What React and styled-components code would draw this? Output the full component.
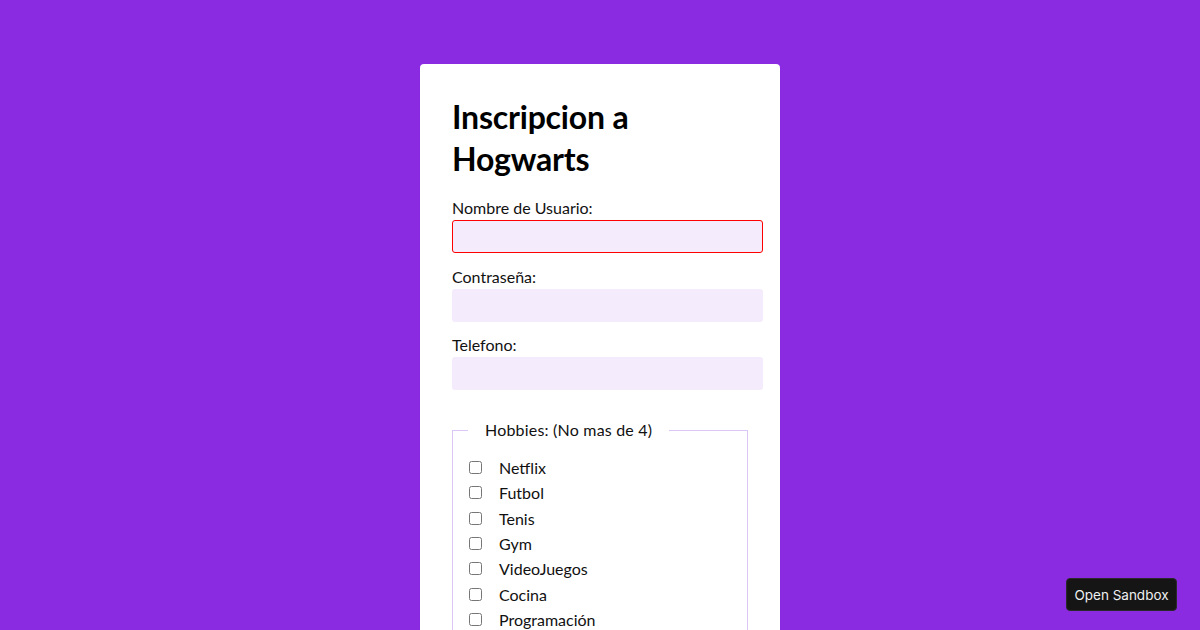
import React from "react";
import styled, { createGlobalStyle } from "styled-components";

const GlobalStyle = createGlobalStyle`
  html, body {
    margin: 0;
    padding: 0;
    background: #8a2be2;
    font-family: "Lato", "Noto Sans", sans-serif;
    color: #111;
  }
`;

const Page = styled.div`
  min-height: 100vh;
  display: flex;
  justify-content: center;
  padding-top: 64px;
  box-sizing: border-box;
`;

const Card = styled.form`
  width: 360px;
  box-sizing: border-box;
  background: #ffffff;
  border-radius: 4px;
  padding: 32px 32px 40px;
  display: flex;
  flex-direction: column;
`;

const Title = styled.h1`
  margin: 0 0 18px;
  font-size: 32px;
  line-height: 42px;
  font-weight: 700;
  color: #000;
  letter-spacing: -0.2px;
`;

const Field = styled.div`
  display: flex;
  flex-direction: column;
  margin-bottom: ${(p) => p.$gap ?? 14}px;
`;

const Label = styled.label`
  font-size: 16px;
  line-height: 20px;
  margin-bottom: 2px;
  color: #111;
`;

const Input = styled.input`
  width: 311px;
  height: 33px;
  box-sizing: border-box;
  margin: 0;
  border: 1px solid ${(p) => (p.$invalid ? "#ff0000" : "transparent")};
  border-radius: 3px;
  background: #f4ebfc;
  outline: none;
  font: inherit;
  padding: 0 8px;
`;

const Hobbies = styled.fieldset`
  width: 296px;
  box-sizing: border-box;
  margin: 15px 0 0;
  padding: 4px 16px 0 15px;
  border: 1px solid #dcc6f4;
  border-radius: 0;
  min-inline-size: auto;
`;

const Legend = styled.legend`
  padding: 0 17px;
  font-size: 16px;
  line-height: 22px;
  letter-spacing: 0.2px;
  color: #111;
`;

const OptionList = styled.div`
  display: flex;
  flex-direction: column;
  padding-top: 10px;
`;

const Option = styled.label`
  display: flex;
  align-items: center;
  height: 25.33px;
  font-size: 16px;
  color: #111;

  input {
    width: 13px;
    height: 13px;
    margin: 0 17px 0 1px;
  }
`;

const SandboxButton = styled.button`
  position: fixed;
  right: 23px;
  bottom: 19px;
  width: 111px;
  height: 33px;
  background: #151515;
  color: #f0f0f0;
  border: 1px solid #2a2a2a;
  border-radius: 4px;
  font-family: "Inter", "Roboto", sans-serif;
  font-size: 13.5px;
  cursor: pointer;
`;

const hobbies = [
  "Netflix",
  "Futbol",
  "Tenis",
  "Gym",
  "VideoJuegos",
  "Cocina",
  "Programación",
];

export default function App() {
  return (
    <>
      <GlobalStyle />
      <Page>
        <Card onSubmit={(e) => e.preventDefault()}>
          <Title>
            Inscripcion a<br />
            Hogwarts
          </Title>
          <Field>
            <Label htmlFor="usuario">Nombre de Usuario:</Label>
            <Input id="usuario" type="text" $invalid />
          </Field>
          <Field $gap={13}>
            <Label htmlFor="pass">Contraseña:</Label>
            <Input id="pass" type="password" />
          </Field>
          <Field $gap={14}>
            <Label htmlFor="tel">Telefono:</Label>
            <Input id="tel" type="tel" />
          </Field>
          <Hobbies>
            <Legend>Hobbies: (No mas de 4)</Legend>
            <OptionList>
              {hobbies.map((h) => (
                <Option key={h}>
                  <input type="checkbox" />
                  {h}
                </Option>
              ))}
            </OptionList>
          </Hobbies>
        </Card>
      </Page>
      <SandboxButton type="button">Open Sandbox</SandboxButton>
    </>
  );
}
